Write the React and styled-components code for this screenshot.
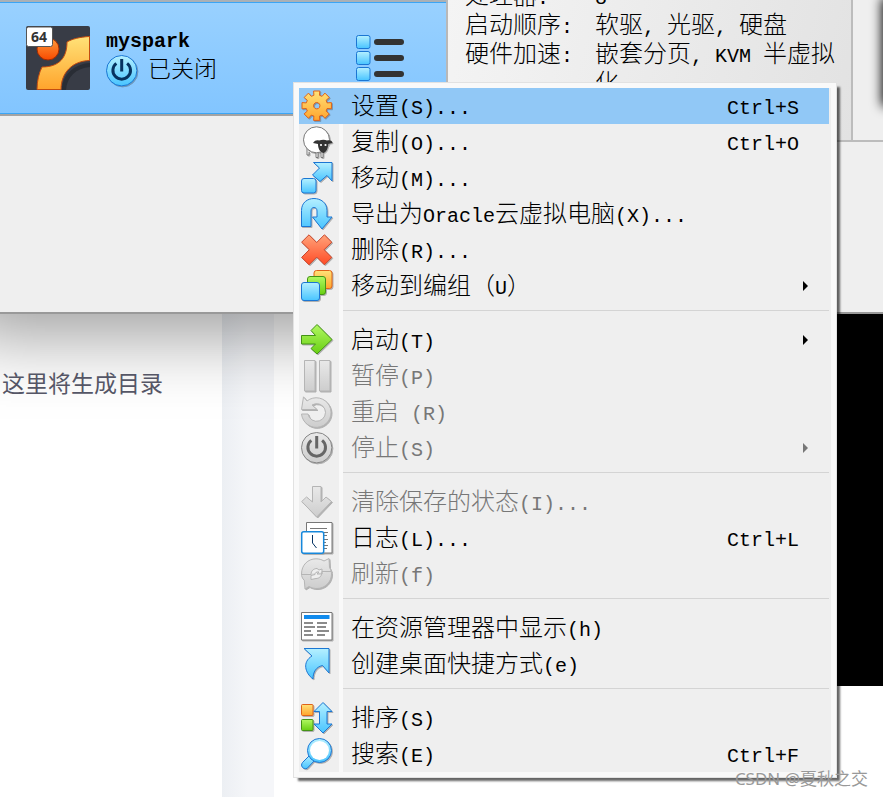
import React from 'react';
import styled, { createGlobalStyle } from 'styled-components';

const GlobalStyle = createGlobalStyle`
  * {
    box-sizing: border-box;
  }

  body {
    margin: 0;
    background: #fff;
    overflow: hidden;
    font-family: "Liberation Mono", "Noto Sans CJK SC", monospace;
    font-size: 24px;
    font-weight: 300;
    color: #000;
  }
`;

const Page = styled.div`
  position: relative;
  min-height: 100vh;
  display: flex;
  flex-direction: column;
`;

/* ---------- manager window ---------- */

const Window = styled.section`
  position: relative;
  z-index: 1;
  display: grid;
  grid-template-columns: 448px 1fr 30px;
  grid-template-rows: 142px 170px;
  background: #efefef;
  border-bottom: 2px solid #999;
  box-shadow: 0 -20px 70px 40px rgba(0, 0, 0, 0.4);
`;

const MachineList = styled.div`
  border-right: 2px solid #b8b8b8;
`;

const Machine = styled.div`
  display: flex;
  align-items: center;
  gap: 16px;
  height: 116px;
  padding: 0 40px 0 26px;
  border-top: 2px solid #a9b0b6;
  border-bottom: 2px solid #a3a3a3;
  background: linear-gradient(#99d1ff, #82c5ff);
  box-shadow: inset 0 1px #3ba5f5, inset 0 -1px #3ba5f5;
`;

const MachineText = styled.div`
  flex: 1;
`;

const MachineName = styled.h1`
  margin: 0;
  font-size: 20px;
  line-height: 26px;
  font-weight: 700;
`;

const MachineState = styled.div`
  display: flex;
  align-items: center;
  gap: 10px;
  line-height: 32px;
  font-size: 23px;
`;

const IconButton = styled.button`
  display: block;
  padding: 4px 0 0;
  border: 0;
  background: none;
`;

const Details = styled.dl`
  display: grid;
  grid-template-columns: 130px 1fr;
  align-content: end;
  margin: 0;
  padding: 0 8px 41px 17px;
  height: 142px;
  overflow: hidden;
  line-height: 28px;
  background: linear-gradient(105deg, #f4f4f4, #e2e2e2);
  border-right: 2px solid #bcbcbc;
  border-bottom: 2px solid #bcbcbc;

  dt,
  dd {
    margin: 0;
  }
`;

const Edge = styled.div`
  overflow: hidden;
  border-bottom: 2px solid #bcbcbc;

  &::after {
    content: '';
    display: block;
    width: 10px;
    height: 104px;
    margin-left: 31px;
    box-shadow: 0 0 12px 2px #000;
  }
`;

/* ---------- article behind the window ---------- */

const Article = styled.main`
  flex: 1;
  display: grid;
  grid-template-columns: 222px 52px 1fr;
  min-height: 480px;
`;

const Toc = styled.aside`
  padding: 52px 2px;
  font-family: "Noto Sans CJK SC", sans-serif;
  font-size: 23px;
  line-height: 32px;
  font-weight: 400;
  color: #555666;
  position: relative;
  z-index: 2;
`;

const Gutter = styled.div`
  background: linear-gradient(90deg, #eceff3, #f5f6f9 50%);
`;

const Video = styled.div`
  position: relative;
  z-index: 2;
  height: 372px;
  margin-left: 40px;
  background: #000;
`;

const Watermark = styled.small`
  position: absolute;
  right: 15px;
  bottom: 5px;
  z-index: 4;
  font-family: "Noto Sans", "Noto Sans CJK SC", sans-serif;
  font-size: 17px;
  line-height: 26px;
  font-weight: 400;
  color: #999;
`;

/* ---------- context menu ---------- */

const Menu = styled.div`
  position: absolute;
  z-index: 3;
  top: 82px;
  left: 293px;
  right: 46px;
  padding: 5px;
  border: 1px solid #e2e2e2;
  background: #f9f9f9;
  box-shadow: 4px 4px 2px -1px rgba(0, 0, 0, 0.6);
`;

const MenuBody = styled.div`
  padding-right: 2px;
  background: linear-gradient(90deg, #efefef 40px, #f9f9f9 40px, #f9f9f9 44px, #efefef 44px);
`;

const Item = styled.button`
  display: grid;
  grid-template-columns: 50px 1fr 82px 20px;
  align-items: center;
  width: 100%;
  height: 36px;
  padding: 0 0 2px 2px;
  border: 0;
  background: ${({ $active }) => ($active ? '#91c8f6' : 'none')};
  color: ${({ disabled }) => (disabled ? '#777' : '#000')};
  font: inherit;
  line-height: 28px;
  text-align: left;
  white-space: nowrap;

  svg {
    display: block;
  }
`;

const Label = styled.span`
  padding-top: 6px;
`;

const Shortcut = styled.kbd`
  font: inherit;
  justify-self: end;
  padding: 6px 10px 0 0;
`;

const Arrow = styled.span`
  grid-column: 4;
  justify-self: start;
  border: 5px solid transparent;
  border-left-color: currentColor;
  border-right: 0;
  margin-left: -6px;
`;

const Separator = styled.hr`
  height: 1px;
  margin: 0 0 11px 44px;
  border: 0;
  border-top: 1px solid #d4d4d4;
`;

const Group = styled.div`
  &:not(:last-child) {
    padding-bottom: 6px;
  }
`;

// Latin letters take half of the width of a Chinese character
const Half = styled.span`
  font-size: 20px;
`;

const Mixed = ({ children }) =>
  children
    .split(/([\x20-\x7e]+)/)
    .filter(Boolean)
    .map((part, i) => (/^[\x20-\x7e]/.test(part) ? <Half key={i}>{part}</Half> : part));

/* ---------- icons ---------- */

const Glyph = styled.svg.attrs({ width: 32, height: 32, viewBox: '0 0 32 32', fill: 'none', 'aria-hidden': true })`
  flex: none;
  overflow: visible;
  filter: drop-shadow(1px 1px 0 rgba(60, 60, 60, 0.35));
`;

const Gradients = () => (
  <svg width="0" height="0" style={{ position: 'absolute' }} aria-hidden="true">
    <defs>
      {[
        ['blue', '#b5f0ff', '#48c4ff'],
        ['orange', '#ffe278', '#ffa42c'],
        ['green', '#b1f862', '#68cf12'],
        ['red', '#ffa37a', '#ff4c26'],
        ['gray', '#e9e9e9', '#cdcdcd'],
        ['ball', '#ff9d3d', '#f64a00'],
      ].map(([id, from, to]) => (
        <linearGradient key={id} id={id} x1="0" y1="0" x2="0" y2="1">
          <stop offset="0" stopColor={from} />
          <stop offset="1" stopColor={to} />
        </linearGradient>
      ))}
    </defs>
  </svg>
);

const blue = { fill: 'url(#blue)', stroke: '#1b76d3' };
const orange = { fill: 'url(#orange)', stroke: '#df6219' };
const green = { fill: 'url(#green)', stroke: '#439216' };
const gray = { fill: 'url(#gray)', stroke: '#b5b5b5' };

// eight teeth, each one as [radius, angle from the tooth's middle]
const gear = Array.from({ length: 8 }, (_, i) => i * 45)
  .flatMap((mid) => [[10.8, -15], [15, -12], [15, 12], [10.8, 15]].map(([r, a]) => [r, ((mid + a) * Math.PI) / 180]))
  .map(([r, a]) => `${(15.7 + r * Math.cos(a)).toFixed(1)} ${(15.7 + r * Math.sin(a)).toFixed(1)}`)
  .join('L');

const GearIcon = () => (
  <Glyph>
    <path {...orange} fillRule="evenodd" strokeLinejoin="round" d={`M${gear}ZM15.7 12.500a3.200 3.200 0 1 0 .1 0z`} />
  </Glyph>
);

const SheepIcon = () => (
  <Glyph>
    <path fill="#fff" stroke="#777" d="M6 22.500v6.500h2v-3M15 27v4.500h2v-4.500M20 26v5.500h2v-5.500" />
    <circle cx="15.500" cy="13.800" r="13" fill="#fff" stroke="#777" />
    <path fill="#333" d="M12 17c2-3 4-3 6-2.500 3-1 6-1 8 0 3-.5 5 0 5.500 2.500l-4.500 1c.2 4-1.500 8-4.500 9-4-1-5.500-5-5.500-9z" />
    <circle cx="20" cy="19" r="1.100" fill="#fff" />
    <circle cx="24.500" cy="19" r="1.100" fill="#fff" />
  </Glyph>
);

const MoveIcon = () => (
  <Glyph>
    <path {...blue} d="M12.500 .5H31v18.500l-5-5.500-7 6-7.500-6.500L18.500 6z" />
    <rect {...blue} x=".5" y="16.500" width="14.500" height="14.500" rx="2.500" />
  </Glyph>
);

const ExportIcon = () => (
  <Glyph>
    <path {...blue} strokeLinejoin="round" d="M.5 28.500V12.500C.5 4.500 6.500.5 13 .5s13 4 13 12v6.500h5L21 31 11.500 19H16v-6c0-2-1-3.500-3-3.500s-3 1.500-3 3.500v15.500z" />
  </Glyph>
);

const DeleteIcon = () => (
  <Glyph>
    <path fill="url(#red)" stroke="#c8452a" strokeLinejoin="round" d="M8 .8l7.700 7.700L23.400.8l7.400 7.400-7.700 7.500 7.700 7.700-7.400 7.400-7.700-7.700L8 30.800.6 23.400l7.700-7.700L.6 8.200z" />
  </Glyph>
);

const GroupIcon = () => (
  <Glyph>
    <rect {...orange} x="13" y=".5" width="18" height="18" rx="2.500" />
    <rect {...green} x="6.500" y="6.500" width="18" height="18" rx="2.500" />
    <rect {...blue} x=".5" y="12.500" width="18" height="18" rx="2.500" />
  </Glyph>
);

const StartIcon = () => (
  <Glyph>
    <path {...green} strokeLinejoin="round" d="M.5 11.500H14.500L10 6.500l6-6 15 15-15 14.500-6-5.500L14.500 20H.5z" />
  </Glyph>
);

const PauseIcon = () => (
  <Glyph>
    <path {...gray} d="M3.500.5h10.500V31H3.500zM18.500.5h10.500V31h-10.500z" />
  </Glyph>
);

const ResetIcon = () => (
  <Glyph>
    <path {...gray} strokeLinejoin="round" d="M2.500.8l3.500 4.200A14.800 14.800 0 1 1 .5 18H7A8.800 8.800 0 1 0 11 9l5 4.500H.5z" />
  </Glyph>
);

const PowerIcon = ({ muted }) => (
  <Glyph>
    <circle cx="15.700" cy="15.700" r="15.200" {...(muted ? { ...gray, stroke: '#858585' } : blue)} />
    <path stroke={muted ? '#666' : '#06325f'} strokeWidth="3" d="M15.700 4v12.500M10.300 8.400a8.800 8.800 0 1 0 10.800 0" />
  </Glyph>
);

const DiscardIcon = () => (
  <Glyph>
    <path {...gray} strokeLinejoin="round" d="M11.500.5h8.500V16l5-5 5.500 4.500L15.700 31 .7 15.500 5.500 11l6 5z" />
  </Glyph>
);

const LogIcon = () => (
  <Glyph>
    <path fill="#fff" stroke="#777" d="M5.500.5H31V31H5.500z" />
    <path stroke="#777" d="M9 6.500h17M22 10.500h5M22 13.500h4M22 17.500h5M22 20.500h3M22 23.500h5M22 26.500h4" />
    <rect x=".7" y="9.700" width="22" height="21.500" rx="2" fill="#fff" stroke="#1688dc" strokeWidth="1.500" />
    <path stroke="#063565" d="M11.500 13v8l4 5" />
  </Glyph>
);

const RefreshIcon = () => (
  <Glyph>
    <path {...gray} strokeLinejoin="round" d="M.5 16C.5 7 7 .8 15 .8c3 0 5.500.7 8 2.200l5-2.500.5 9c1.500 2.500 2 4.500 2 6.500 0 8-6.500 14.500-14.500 14.500-3 0-5.500-.5-8-2l-4 2.500-.7-8.500C1 20 .5 18 .5 16z" />
    <path {...gray} fill="#eee" d="M.5 16.500H10c0-4 3-6 6-6l2 1.500 3-1v5h-5l2-2c-3-.5-4 1-4 2.500l-4 1v4l5-1c3 0 6-2 6-7h9.500" />
  </Glyph>
);

const ExplorerIcon = () => (
  <Glyph>
    <path fill="#fff" stroke="#777" d="M.5.5h30.500v27.500H.5z" />
    <path fill="#118bed" d="M3 3h25.500v4H3z" />
    <path stroke="#666" strokeWidth="1.500" d="M3 11h9M16 11h10M3 15h11M16 15h9M3 19h7M16 19h12M3 23h9M16 23h8" />
  </Glyph>
);

const ShortcutIcon = () => (
  <Glyph>
    <path {...blue} strokeLinejoin="round" d="M3 .5H28V25l-6.500-7.500C15 19 12 24 12 31 4 25 1 14 11 8z" />
  </Glyph>
);

const SortIcon = () => (
  <Glyph>
    <rect {...orange} x=".5" y="2.500" width="11.500" height="11" rx="1" />
    <rect {...green} x=".5" y="17.500" width="11.500" height="11" rx="1" />
    <path {...blue} strokeLinejoin="round" d="M22 .5l9 9h-5V22h5l-9 9-9-9h5.500V9.500H13z" />
  </Glyph>
);

const SearchIcon = () => (
  <Glyph>
    <path {...blue} d="M9 17L1.500 24.500C-1 28 2 31.500 6 30.500L14 22z" />
    <circle cx="18.500" cy="12.500" r="12" {...blue} />
    <circle cx="18.500" cy="12.500" r="9.500" fill="#fff" />
  </Glyph>
);

const ListIcon = () => (
  <svg width="50" height="48" viewBox="0 0 50 48" aria-hidden="true">
    {[0, 16, 32].map((y) => (
      <g key={y}>
        <rect {...blue} x=".5" y={y + 0.5} width="13.500" height="13" rx="2" />
        <rect fill="#333" x="18" y={y + 4} width="30" height="6" rx="3" />
      </g>
    ))}
  </svg>
);

const MachineIcon = () => (
  <svg width="64" height="64" viewBox="0 0 64 64" fill="none" aria-hidden="true">
    <rect width="64" height="64" rx="2" fill="#383c46" />
    <path fill="#292d35" d="M36 64c0-14 11-26 28-27v4c-14 1-23 10-24 23z" />
    <circle cx="22" cy="23" r="11" fill="url(#ball)" stroke="#a42b00" />
    <path
      fill="url(#orange)"
      stroke="#c34c10"
      d="M63.500 10.500C54 11 46 13 41 16c0 15-7 25-25 25-3 6-5 14-5 22.500h24C35 47 46 35 63.500 34.500z"
    />
    <rect x=".5" y="1" width="26" height="19.500" rx="2" fill="#fff" stroke="#555" />
    <text x="5" y="16" fill="#333" fontSize="14" fontWeight="700" fontFamily="Open Sans, sans-serif">
      64
    </text>
  </svg>
);

const groups = [
  [
    { label: '设置(S)...', keys: 'Ctrl+S', Icon: GearIcon, active: true },
    { label: '复制(O)...', keys: 'Ctrl+O', Icon: SheepIcon },
    { label: '移动(M)...', Icon: MoveIcon },
    { label: '导出为Oracle云虚拟电脑(X)...', Icon: ExportIcon },
    { label: '删除(R)...', Icon: DeleteIcon },
    { label: '移动到编组（U）', Icon: GroupIcon, more: true },
  ],
  [
    { label: '启动(T)', Icon: StartIcon, more: true },
    { label: '暂停(P)', Icon: PauseIcon, disabled: true },
    { label: '重启 (R)', Icon: ResetIcon, disabled: true },
    { label: '停止(S)', Icon: () => <PowerIcon muted />, disabled: true, more: true },
  ],
  [
    { label: '清除保存的状态(I)...', Icon: DiscardIcon, disabled: true },
    { label: '日志(L)...', keys: 'Ctrl+L', Icon: LogIcon },
    { label: '刷新(f)', Icon: RefreshIcon, disabled: true },
  ],
  [
    { label: '在资源管理器中显示(h)', Icon: ExplorerIcon },
    { label: '创建桌面快捷方式(e)', Icon: ShortcutIcon },
  ],
  [
    { label: '排序(S)', Icon: SortIcon },
    { label: '搜索(E)', keys: 'Ctrl+F', Icon: SearchIcon },
  ],
];

const details = [
  ['处理器:', '8'],
  ['启动顺序:', '软驱, 光驱, 硬盘'],
  ['硬件加速:', '嵌套分页, KVM 半虚拟化'],
];

const ContextMenu = () => (
  <Menu role="menu">
    <MenuBody>
      {groups.map((items, i) => (
        <React.Fragment key={i}>
          {i > 0 && <Separator />}
          <Group>
            {items.map(({ label, keys, Icon, active, disabled, more }) => (
              <Item key={label} type="button" role="menuitem" $active={active} disabled={disabled}>
                <Icon />
                <Label>
                  <Mixed>{label}</Mixed>
                </Label>
                {keys && (
                  <Shortcut>
                    <Mixed>{keys}</Mixed>
                  </Shortcut>
                )}
                {more && <Arrow />}
              </Item>
            ))}
          </Group>
        </React.Fragment>
      ))}
    </MenuBody>
  </Menu>
);

const App = () => (
  <>
    <GlobalStyle />
    <Gradients />
    <Page>
      <Window>
        <MachineList>
          <Machine>
            <MachineIcon />
            <MachineText>
              <MachineName>myspark</MachineName>
              <MachineState>
                <PowerIcon />
                已关闭
              </MachineState>
            </MachineText>
            <IconButton type="button" aria-label="工具">
              <ListIcon />
            </IconButton>
          </Machine>
        </MachineList>
        <Details>
          {details.map(([name, value]) => (
            <React.Fragment key={name}>
              <dt>
                <Mixed>{name}</Mixed>
              </dt>
              <dd>
                <Mixed>{value}</Mixed>
              </dd>
            </React.Fragment>
          ))}
        </Details>
        <Edge />
      </Window>
      <Article>
        <Toc>这里将生成目录</Toc>
        <Gutter />
        <Video />
      </Article>
      <ContextMenu />
      <Watermark>CSDN @夏秋之交</Watermark>
    </Page>
  </>
);

export default App;
